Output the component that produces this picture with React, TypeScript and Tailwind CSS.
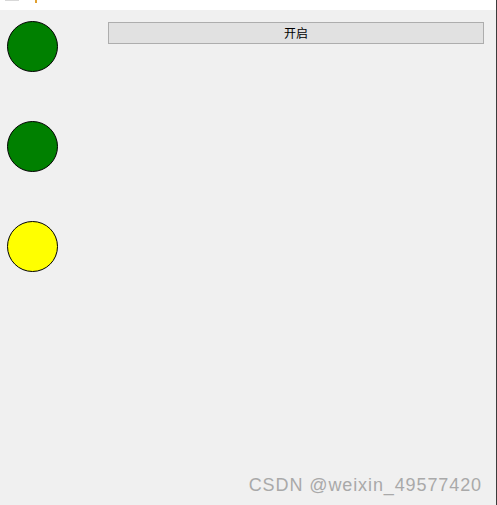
import React from 'react';

const lights = ['bg-[#008000]', 'bg-[#008000]', 'bg-[#ffff00]'];

const App: React.FC = () => {
  return (
    <div className="w-[497px] h-[505px] bg-[#f0f0f0] flex flex-col overflow-hidden border-r border-[#3c3c3c]" style={{ fontFamily: '"Liberation Sans", "Noto Sans CJK SC", sans-serif' }}>
      {/* cut-off title bar */}
      <div className="h-[10px] bg-white flex items-start shrink-0">
        <div className="ml-[5px] w-[14px] h-[1px] bg-[#d8d8d8]" />
        <div className="ml-[16px] w-[2px] h-[3px] bg-[#e0a030]" />
      </div>

      <div className="flex flex-1 relative">
        <div className="flex flex-col gap-[49px] pl-[7px] pt-[11px]">
          {lights.map((c, i) => (
            <div key={i} className={`w-[51px] h-[51px] rounded-full border border-black ${c}`} />
          ))}
        </div>

        <div className="flex-1 pl-[50px] pr-[12px] pt-[12px]">
          <button className="w-full h-[22px] bg-[#e1e1e1] border border-[#adadad] text-[12px] text-black leading-none flex items-center justify-center pt-[2px]">
            开启
          </button>
        </div>

        <div className="absolute right-[14px] bottom-[6px] text-[18px] font-normal tracking-[0.9px] text-[#a9a9a9]">
          CSDN @weixin_49577420
        </div>
      </div>
    </div>
  );
};

export default App;
